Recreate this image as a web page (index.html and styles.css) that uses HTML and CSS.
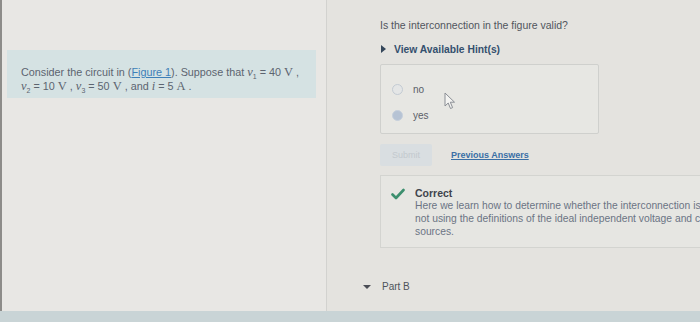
FILE: index.html
```html
<!DOCTYPE html>
<html>
<head>
<meta charset="utf-8">
<link rel="stylesheet" href="styles.css">
</head>
<body>
<div class="page">
  <div class="left">
    <div class="intro">
      <p>Consider the circuit in (<a class="fig">Figure 1</a>). Suppose that <i class="m">v</i><sub>1</sub> = 40 <span class="m">V</span> ,<br>
      <i class="m">v</i><sub>2</sub> = 10 <span class="m">V</span> , <i class="m">v</i><sub>3</sub> = 50 <span class="m">V</span> , and <i class="m">i</i> = 5 <span class="m">A</span> .</p>
    </div>
  </div>
  <div class="right">
    <p class="question">Is the interconnection in the figure valid?</p>
    <div class="hint"><span class="tri"></span>View Available Hint(s)</div>
    <div class="options">
      <div class="opt"><span class="radio"></span>no</div>
      <div class="opt"><span class="radio sel"></span>yes</div>
    </div>
    <div class="actions">
      <span class="submit">Submit</span>
      <a class="prev">Previous Answers</a>
    </div>
    <div class="feedback">
      <svg class="check" width="14" height="12" viewBox="0 0 14 12"><path d="M1.5 6.5 L5 10 L12.5 2" fill="none" stroke="#3c8f6e" stroke-width="2.6" stroke-linecap="round" stroke-linejoin="round"/></svg>
      <div class="fbtext">
        <div class="fbtitle">Correct</div>
        <div class="fbbody">Here we learn how to determine whether the interconnection is valid or<br>not using the definitions of the ideal independent voltage and current<br>sources.</div>
      </div>
    </div>
    <div class="partb"><span class="caret"></span>Part B</div>
  </div>
  <svg class="cursor" width="14" height="18" viewBox="0 0 14 18"><path d="M1 1 L1 14 L4.2 11 L6.5 16.5 L8.6 15.6 L6.3 10.2 L10.5 10.2 Z" fill="#f4f4f2" stroke="#8a8e94" stroke-width="1"/></svg>
</div>
<div class="bottom"></div>
</body>
</html>
```

FILE: styles.css
```css
html, body {
  margin: 0;
  padding: 0;
}
body {
  width: 700px;
  height: 322px;
  overflow: hidden;
  background: #e4e3df;
  font-family: "Liberation Sans", Arial, sans-serif;
  color: #5f646c;
  position: relative;
}
.page {
  display: flex;
  height: 311px;
  position: relative;
}
.left {
  flex: none;
  width: 327px;
  border-left: 2px solid #8d8c89;
  border-right: 1px solid #d2d2cf;
  background: #e8e7e4;
  padding-top: 50px;
  box-sizing: border-box;
}
.intro {
  margin-left: 5px;
  width: 309px;
  height: 48px;
  background: #d5e2e3;
  box-sizing: border-box;
  padding: 15px 0 0 14px;
}
.intro p {
  margin: 0;
  font-size: 10.8px;
  line-height: 14px;
  color: #5c6470;
  white-space: nowrap;
}
.intro sub {
  font-size: 7px;
  line-height: 0;
}
.m {
  font-family: "Liberation Serif", "Times New Roman", serif;
  font-size: 12.5px;
}
.fig {
  color: #3d7fb8;
  text-decoration: underline;
}
.right {
  flex: 1;
  min-width: 0;
  padding-left: 53px;
  padding-top: 18px;
  box-sizing: border-box;
}
.question {
  margin: 0;
  font-size: 10.5px;
  line-height: 14px;
  color: #50555d;
}
.hint {
  margin-top: 10px;
  font-size: 10.3px;
  font-weight: bold;
  color: #34506e;
  display: flex;
  align-items: center;
  height: 14px;
}
.tri {
  width: 0;
  height: 0;
  border-top: 4px solid transparent;
  border-bottom: 4px solid transparent;
  border-left: 5px solid #34465a;
  margin: 0 8px 0 1px;
}
.options {
  margin-top: 8px;
  width: 219px;
  height: 70px;
  border: 1px solid #cfd0cd;
  border-radius: 2px;
  background: #e7e7e3;
  box-sizing: border-box;
  padding-top: 18px;
}
.opt {
  display: flex;
  align-items: center;
  font-size: 10px;
  color: #5b6068;
  height: 12px;
  margin-bottom: 14px;
  padding-left: 11px;
}
.radio {
  width: 9px;
  height: 9px;
  border-radius: 50%;
  border: 1px solid #c3cbd3;
  background: #e4e6e6;
  margin-right: 10px;
}
.radio.sel {
  background: #b6c3d4;
  border-color: #c6d0dc;
}
.actions {
  margin-top: 10px;
  display: flex;
  align-items: center;
  height: 22px;
}
.submit {
  width: 52px;
  height: 22px;
  background: #d9dee1;
  border-radius: 2px;
  color: #c3c9ce;
  font-size: 9px;
  line-height: 22px;
  text-align: center;
}
.prev {
  margin-left: 19px;
  font-size: 9px;
  font-weight: bold;
  color: #3a6fa6;
  text-decoration: underline;
}
.feedback {
  margin-top: 9px;
  height: 73px;
  border: 1px solid #d3d4d0;
  border-right: none;
  background: #e6e6e2;
  box-sizing: border-box;
  display: flex;
  padding: 11px 0 0 10px;
}
.check {
  margin-top: 1px;
  flex: none;
}
.fbtext {
  margin-left: 10px;
  white-space: nowrap;
  overflow: hidden;
}
.fbtitle {
  font-size: 10.5px;
  font-weight: bold;
  color: #3f444c;
  line-height: 12px;
}
.fbbody {
  font-size: 10.3px;
  line-height: 13px;
  color: #6b7484;
}
.partb {
  margin-top: 33px;
  margin-left: -17px;
  display: flex;
  align-items: center;
  font-size: 10px;
  color: #4e535b;
}
.caret {
  width: 0;
  height: 0;
  border-left: 4px solid transparent;
  border-right: 4px solid transparent;
  border-top: 4px solid #4a4d55;
  margin-right: 11px;
}
.cursor {
  position: absolute;
  left: 444px;
  top: 92px;
}
.bottom {
  height: 11px;
  background: #c9d4d6;
}
```
